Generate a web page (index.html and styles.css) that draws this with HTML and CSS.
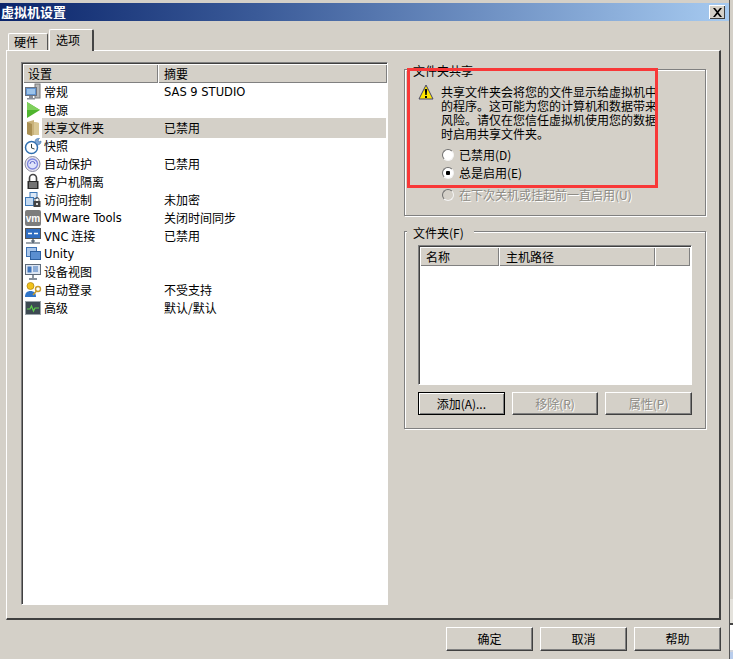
FILE: index.html
```html
<!DOCTYPE html>
<html lang="zh">
<head>
<meta charset="utf-8">
<title>虚拟机设置</title>
<link rel="stylesheet" href="styles.css">
</head>
<body>
<div class="window">
  <div class="titlebar">
    <span class="title">虚拟机设置</span>
    <span class="close"><svg width="11" height="9" viewBox="0 0 11 9"><path d="M1 0h2l2.500 3L8 0h2L6.500 4.500 10 9H8L5.500 6 3 9H1l3.500-4.500z" fill="#000"/></svg></span>
  </div>
  <div class="tabs">
    <span class="tab">硬件</span>
    <span class="tab tab-active">选项</span>
  </div>
  <div class="panel">
    <div class="sunken settings">
      <div class="head settings-head"><span class="hcell">设置</span><span class="hcell">摘要</span></div>
      <div class="row"><span class="ico"><svg width="18" height="18" viewBox="0 0 18 18"><rect x="11" y="1" width="5" height="14" fill="#b8b8b8" stroke="#777"/><rect x="1.500" y="4.500" width="11" height="8" fill="#5f92cf" stroke="#6b7280"/><rect x="3" y="6" width="8" height="5" fill="#9cc3ea"/><path d="M5 13h4v2H5zM3 15h8v1.500H3z" fill="#8a8f99"/></svg></span><span class="name">常规</span><span class="sum latin">SAS 9 STUDIO</span></div>
      <div class="row"><span class="ico"><svg width="18" height="18" viewBox="0 0 18 18"><path d="M3 1l13 8-13 8z" fill="#4fb52e"/><path d="M3 1l13 8H3z" fill="#7fd05c"/></svg></span><span class="name">电源</span><span class="sum"></span></div>
      <div class="row selected"><span class="ico"><svg width="18" height="18" viewBox="0 0 18 18"><path d="M3 3l7-2v2l5 1v12H9l-1 1-5-2z" fill="#c9b27a"/><path d="M3 3l5 2v12l-5-2z" fill="#a98f52"/><path d="M10 3l5 1v12h-5z" fill="#d9c794"/></svg></span><span class="name">共享文件夹</span><span class="sum">已禁用</span></div>
      <div class="row"><span class="ico"><svg width="18" height="18" viewBox="0 0 18 18"><circle cx="7.500" cy="10.500" r="6" fill="#fff" stroke="#2f6fb0" stroke-width="1.500"/><path d="M7.500 7v4l3 1" fill="none" stroke="#344" /><path d="M11 5c0-3 2-4 4.500-3.500L14 3l1 2 2-1c.3 2.500-2 4.500-4 3.500z" fill="#7ea7d6" stroke="#3c6ea5" stroke-width=".6"/></svg></span><span class="name">快照</span><span class="sum"></span></div>
      <div class="row"><span class="ico"><svg width="18" height="18" viewBox="0 0 18 18"><circle cx="8.500" cy="9" r="7.500" fill="#e6e4ee" stroke="#8a8aa0"/><circle cx="8.500" cy="9" r="5" fill="#dfe3fa" stroke="#7d86e0" stroke-width="1.300"/><path d="M6 9a2.500 2.500 0 0 1 5 0" fill="none" stroke="#5a63c8"/></svg></span><span class="name">自动保护</span><span class="sum">已禁用</span></div>
      <div class="row"><span class="ico"><svg width="18" height="18" viewBox="0 0 18 18"><path d="M5.500 8V5a3.500 3.500 0 0 1 7 0v3" fill="none" stroke="#444" stroke-width="1.600"/><rect x="3.500" y="8" width="11" height="8" fill="#2b2b2b"/><path d="M5 10h8M5 12h8M5 14h8" stroke="#bdbdbd"/></svg></span><span class="name">客户机隔离</span><span class="sum"></span></div>
      <div class="row"><span class="ico"><svg width="18" height="18" viewBox="0 0 18 18"><rect x="6" y="1.500" width="7" height="6" fill="#dbe8f7" stroke="#3d78b8"/><rect x="1.500" y="6.500" width="8" height="8" fill="#c4daf2" stroke="#3d78b8"/><path d="M11 10V8.500a2 2 0 0 1 4 0V10" fill="none" stroke="#555"/><rect x="9.500" y="10" width="7" height="6" fill="#444"/><rect x="12" y="12" width="2" height="2" fill="#ddd"/></svg></span><span class="name">访问控制</span><span class="sum">未加密</span></div>
      <div class="row"><span class="ico"><svg width="18" height="18" viewBox="0 0 18 18"><rect x="1" y="1" width="16" height="16" rx="2" fill="#7d7d7d"/><text x="9" y="12.500" text-anchor="middle" class="vm-mark">vm</text></svg></span><span class="name latin">VMware Tools</span><span class="sum">关闭时间同步</span></div>
      <div class="row"><span class="ico"><svg width="18" height="18" viewBox="0 0 18 18"><rect x="1.500" y="1.500" width="15" height="10" fill="#2f6cc0" stroke="#555"/><path d="M4 6.500h4M10 6.500h4" stroke="#fff" stroke-width="1.400"/><path d="M7 14h4M2 16h14M9 12v4" stroke="#3a4a5a" stroke-width="1.200"/></svg></span><span class="name"><span class="latin">VNC</span> 连接</span><span class="sum">已禁用</span></div>
      <div class="row"><span class="ico"><svg width="18" height="18" viewBox="0 0 18 18"><rect x="2.500" y="2.500" width="10" height="9" fill="#a9c6ea" stroke="#3d72b5"/><rect x="6.500" y="6.500" width="10" height="8" fill="#5a8ed0" stroke="#2d5f9f"/></svg></span><span class="name latin">Unity</span><span class="sum"></span></div>
      <div class="row"><span class="ico"><svg width="18" height="18" viewBox="0 0 18 18"><rect x="1.500" y="1.500" width="15" height="10" fill="#dfe7f3" stroke="#5f6b7a"/><rect x="3.500" y="3.500" width="4" height="6" fill="#3f74bb"/><path d="M9 4h5M9 6h5M9 8h5" stroke="#3f74bb"/><path d="M9 12v3M5 16h8" stroke="#5f6b7a" stroke-width="1.400"/></svg></span><span class="name">设备视图</span><span class="sum"></span></div>
      <div class="row"><span class="ico"><svg width="18" height="18" viewBox="0 0 18 18"><circle cx="6.500" cy="5" r="3.500" fill="#f2c21a" stroke="#a87f10" stroke-width=".7"/><path d="M1 16c0-4 2-6 5.500-6S12 12 12 16z" fill="#2f74c8"/><circle cx="14" cy="8" r="2.500" fill="none" stroke="#c89a2a" stroke-width="1.400"/><path d="M12.500 10l-3.500 4" stroke="#c89a2a" stroke-width="1.500"/></svg></span><span class="name">自动登录</span><span class="sum">不受支持</span></div>
      <div class="row"><span class="ico"><svg width="18" height="18" viewBox="0 0 18 18"><rect x="1.500" y="2.500" width="15" height="13" fill="#3d4a52" stroke="#9aa3a8"/><path d="M3 10h3l1.500-3 2 5 1.500-3h4" fill="none" stroke="#5ed04a" stroke-width="1.200"/></svg></span><span class="name">高级</span><span class="sum">默认/默认</span></div>
    </div>
    <div class="side">
      <div class="group group-share">
        <span class="legend">文件夹共享</span>
        <div class="warning">
          <svg class="warn-ico" width="16" height="16" viewBox="0 0 16 16"><path d="M8 1l7 14H1z" fill="#ffe600" stroke="#44446a"/><path d="M6.800 5h2.400l-.5 6H7.300zM7 12h2v2H7z" fill="#000"/></svg>
          <p class="warn-text">共享文件夹会将您的文件显示给虚拟机中<br>的程序。这可能为您的计算机和数据带来<br>风险。请仅在您信任虚拟机使用您的数据<br>时启用共享文件夹。</p>
        </div>
        <div class="options">
          <div class="opt"><span class="radio"></span>已禁用(D)</div>
          <div class="opt"><span class="radio radio-on"></span>总是启用(E)</div>
          <div class="opt opt-off"><span class="radio radio-off"></span>在下次关机或挂起前一直启用(U)</div>
        </div>
      </div>
      <div class="group group-folders">
        <span class="legend">文件夹(F)</span>
        <div class="sunken folders">
          <div class="head folders-head"><span class="hcell">名称</span><span class="hcell">主机路径</span><span class="hcell"></span></div>
        </div>
        <div class="group-buttons">
          <span class="btn btn-default">添加(A)...</span>
          <span class="btn btn-off">移除(R)</span>
          <span class="btn btn-off">属性(P)</span>
        </div>
      </div>
    </div>
  </div>
  <div class="footer">
    <span class="btn btn-main">确定</span>
    <span class="btn btn-main">取消</span>
    <span class="btn btn-main">帮助</span>
  </div>
  <div class="annotation"></div>
</div>
</body>
</html>
```
FILE: styles.css
```css
* { box-sizing: border-box; }
html, body { margin: 0; padding: 0; }
body {
  width: 733px;
  height: 659px;
  overflow: hidden;
  background: linear-gradient(to bottom, #d4d0c8 0, #d4d0c8 599px, #e4e2dc 599px, #e4e2dc 623px, #444 623px, #444 625px, #fff 625px, #fff 650px, #cfd3dc 650px, #cfd3dc 652px, #b9cdec 652px);
  font: 12px/14px "Noto Sans CJK SC", "Liberation Sans", sans-serif;
  color: #000;
}
.window {
  position: relative;
  width: 730px;
  height: 659px;
  padding-top: 3px;
  background: #d4d0c8;
  border-right: 1px solid #555;
}
.titlebar {
  display: flex;
  align-items: center;
  justify-content: space-between;
  height: 18px;
  padding: 0 4px 0 1px;
  background: linear-gradient(to right, #0a246a 0, #3a5a98 35%, #a6caf0 100%);
}
.title { color: #fff; font-weight: 700; font-size: 13px; line-height: 18px; }
.close {
  display: flex;
  align-items: center;
  justify-content: center;
  width: 16px;
  height: 14px;
  background: #d4d0c8;
  box-shadow: inset 1px 1px 0 #fff, inset -1px -1px 0 #404040;
}
.tabs {
  display: flex;
  align-items: flex-end;
  height: 29px;
  padding-left: 8px;
}
.tab {
  width: 40px;
  height: 17px;
  padding-left: 5px;
  line-height: 15px;
  background: #d4d0c8;
  border: 1px solid #fff;
  border-bottom: 0;
  border-right-color: #555;
  border-radius: 2px 2px 0 0;
}
.tab-active {
  position: relative;
  z-index: 1;
  width: 45px;
  height: 22px;
  margin: 0 0 -1px 1px;
  padding-left: 6px;
  line-height: 20px;
  border-right: 2px solid #444;
}
.panel {
  display: flex;
  gap: 16px;
  width: 715px;
  height: 570px;
  margin-left: 6px;
  padding: 11px 14px;
  border: 1px solid #fff;
  border-right: 2px solid #404040;
  border-bottom: 2px solid #404040;
}
.sunken {
  padding: 1px;
  background: #fff;
  border: 1px solid;
  border-color: #808080 #fff #fff #808080;
  box-shadow: inset 1px 1px 0 #404040;
}
.settings { width: 367px; height: 543px; }
.head { display: grid; height: 17px; }
.settings-head { grid-template-columns: 135px 229px; margin-bottom: 1px; }
.folders-head { grid-template-columns: 79px 156px 35px; }
.hcell {
  height: 100%;
  padding-left: 5px;
  line-height: 19px;
  background: #d4d0c8;
  box-shadow: inset 1px 1px 0 #fff, inset -1px -1px 0 #808080;
}
.settings-head .hcell + .hcell { padding-left: 6px; }
.folders-head .hcell { padding-left: 6px; }
.folders-head .hcell + .hcell { padding-left: 7px; }
.row {
  display: grid;
  grid-template-columns: 19px 122px 1fr;
  height: 18px;
  line-height: 20px;
}
.ico { display: flex; align-items: flex-start; justify-content: flex-end; padding-top: 1px; }
.ico svg { display: block; }
.vm-mark { font: 700 10px "Liberation Sans", sans-serif; fill: #fff; }
.name { padding-left: 2px; white-space: nowrap; }
.sum { white-space: nowrap; }
.selected .name, .selected .sum { background: #d4d0c8; }
.latin { font-family: "DejaVu Sans", sans-serif; font-size: 11.500px; color: #000; }
.side { width: 302px; padding-top: 7px; }
.group {
  position: relative;
  width: 302px;
  background: #d4d0c8;
  border: 1px solid #808080;
  box-shadow: inset 1px 1px 0 #fff, 1px 1px 0 #fff;
}
.group-share { height: 147px; padding: 15px 0 0 13px; }
.group-folders { height: 198px; margin-top: 15px; padding: 13px 13px 0; }
.legend {
  position: absolute;
  left: 2px;
  top: -6px;
  padding: 0 10px 0 6px;
  background: #d4d0c8;
  line-height: 14px;
}
.warning { display: flex; gap: 7px; }
.warn-ico { flex: none; margin-top: -1px; }
.warn-text { margin: 0; white-space: nowrap; line-height: 14px; }
.options { padding: 5px 0 0 24px; }
.opt {
  display: flex;
  align-items: center;
  gap: 5px;
  height: 18px;
  line-height: 18px;
}
.opt-off { margin-top: 4px; color: #8e8c86; text-shadow: 1px 1px 0 #fff; }
.radio {
  flex: none;
  width: 12px;
  height: 12px;
  border-radius: 50%;
  background: #fff;
  border: 1px solid;
  border-color: #707070 #f4f4f4 #f4f4f4 #707070;
}
.radio-on { background: radial-gradient(circle, #000 0, #000 2px, #fff 2.500px); }
.radio-off { background: #d4d0c8; }
.folders { width: 274px; height: 140px; }
.group-buttons { display: flex; gap: 7px; margin-top: 7px; }
.btn {
  display: block;
  width: 87px;
  height: 23px;
  line-height: 21px;
  text-align: center;
  background: #d4d0c8;
  border: 1px solid;
  border-color: #fff #404040 #404040 #fff;
  box-shadow: inset -1px -1px 0 #808080;
}
.btn-default {
  border-color: #000;
  box-shadow: inset 1px 1px 0 #fff, inset -1px -1px 0 #808080;
}
.btn-off { color: #8e8c86; text-shadow: 1px 1px 0 #fff; }
.btn-main { height: 24px; line-height: 22px; }
.footer {
  display: flex;
  justify-content: flex-end;
  gap: 7px;
  padding: 7px 8px 0 0;
}
.annotation {
  position: absolute;
  left: 407px;
  top: 68px;
  width: 251px;
  height: 120px;
  border: 3px solid #f83838;
}
```
